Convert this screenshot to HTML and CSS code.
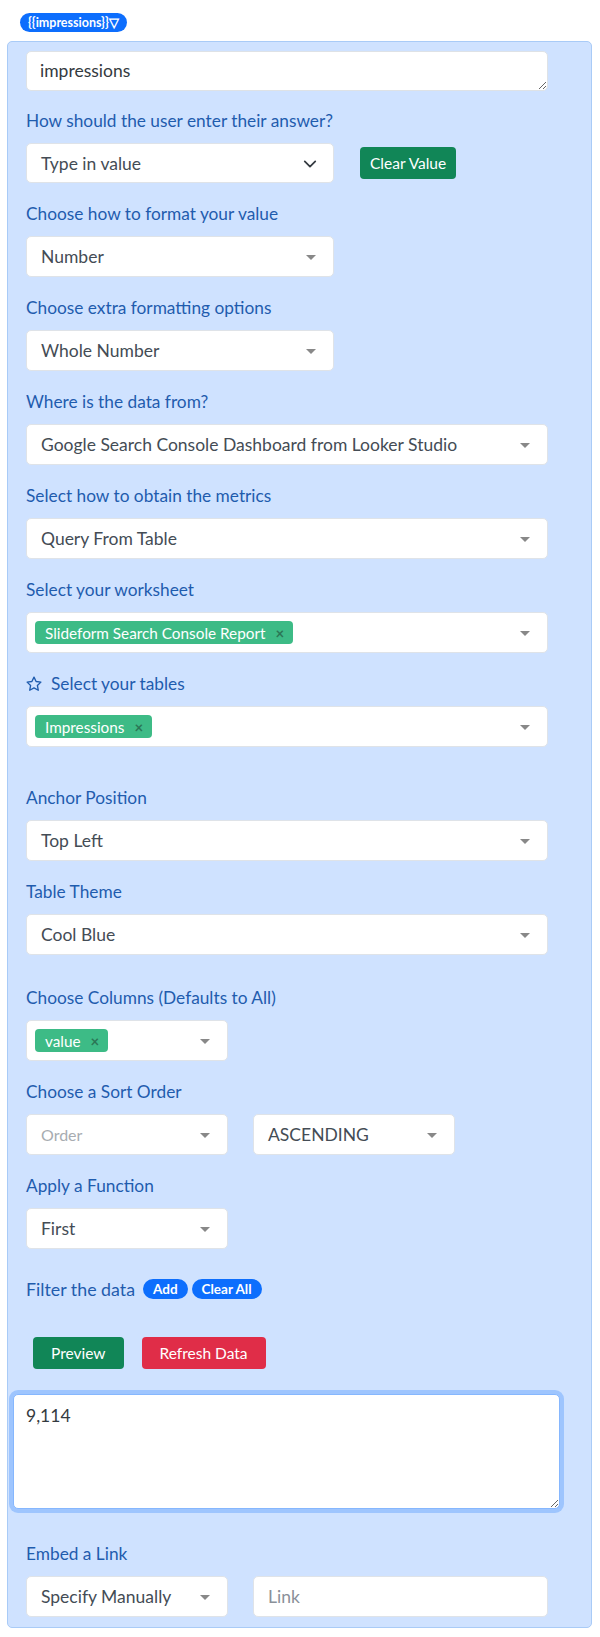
FILE: index.html
```html
<!DOCTYPE html>
<html lang="en">
<head>
    <meta charset="UTF-8">
    <title>Metric Variable</title>
    <link rel="stylesheet" href="styles.css">
</head>
<body>
<div class="page">
    <span class="var-badge">{{impressions}}&#9661;</span>

    <div class="panel">
        <div class="fields">
            <textarea class="name-input" rows="1">impressions</textarea>

            <!-- answer type -->
            <label class="field-label gap-sm">How should the user enter their answer?</label>
            <div class="row">
                <div class="native-select w-mid">Type in value
                    <svg class="chevron" width="14" height="14" viewBox="0 0 16 16"><path d="M2 5l6 6 6-6" fill="none" stroke="#343a40" stroke-width="2" stroke-linecap="round" stroke-linejoin="round"/></svg>
                </div>
                <button class="btn btn-green btn-clear">Clear Value</button>
            </div>

            <label class="field-label">Choose how to format your value</label>
            <div class="select w-mid">Number<span class="caret"></span></div>

            <label class="field-label">Choose extra formatting options</label>
            <div class="select w-mid">Whole Number<span class="caret"></span></div>

            <!-- data source -->
            <label class="field-label">Where is the data from?</label>
            <div class="select w-full">Google Search Console Dashboard from Looker Studio<span class="caret"></span></div>

            <label class="field-label">Select how to obtain the metrics</label>
            <div class="select w-full">Query From Table<span class="caret"></span></div>

            <label class="field-label">Select your worksheet</label>
            <div class="select multi w-full">
                <span class="tag">Slideform Search Console Report <span class="tag-x">&times;</span></span>
                <span class="caret"></span>
            </div>

            <label class="field-label">
                <svg class="star" width="18" height="18" viewBox="0 0 24 24"><path d="M12 2.8l2.8 5.9 6.4.8-4.7 4.4 1.2 6.4L12 17.2l-5.7 3.1 1.2-6.4-4.7-4.4 6.4-.8z" fill="none" stroke="#1f5cae" stroke-width="1.8" stroke-linejoin="round"/></svg>
                Select your tables
            </label>
            <div class="select multi w-full">
                <span class="tag">Impressions <span class="tag-x">&times;</span></span>
                <span class="caret"></span>
            </div>

            <!-- table options -->
            <label class="field-label gap-lg">Anchor Position</label>
            <div class="select w-full">Top Left<span class="caret"></span></div>

            <label class="field-label">Table Theme</label>
            <div class="select w-full">Cool Blue<span class="caret"></span></div>

            <label class="field-label gap-md">Choose Columns (Defaults to All)</label>
            <div class="select multi w-sm">
                <span class="tag">value <span class="tag-x">&times;</span></span>
                <span class="caret"></span>
            </div>

            <label class="field-label">Choose a Sort Order</label>
            <div class="row">
                <div class="select w-sm placeholder">Order<span class="caret"></span></div>
                <div class="select w-sm">ASCENDING<span class="caret"></span></div>
            </div>

            <label class="field-label">Apply a Function</label>
            <div class="select w-sm">First<span class="caret"></span></div>

            <div class="filter-line">
                <span class="filter-text">Filter the data</span>
                <span class="pill">Add</span>
                <span class="pill">Clear All</span>
            </div>

            <div class="actions">
                <button class="btn btn-green">Preview</button>
                <button class="btn btn-red">Refresh Data</button>
            </div>
        </div>

        <textarea class="result-box">9,114</textarea>

        <div class="fields">
            <label class="field-label gap-link">Embed a Link</label>
            <div class="row">
                <div class="select w-sm">Specify Manually<span class="caret"></span></div>
                <div class="text-input">Link</div>
            </div>
        </div>
    </div>
</div>
</body>
</html>
```

FILE: styles.css
```css
body {
    margin: 0;
    font-family: Lato, 'Open Sans', Arial, sans-serif;
    color: #343a40;
    background: #fff;
}
.page {
    padding: 11px 8px 12px 7px;
}
.var-badge {
    display: inline-block;
    margin-left: 13px;
    padding: 2px 8px 2px 8px;
    background: #0d6efd;
    color: #fff;
    font-size: 12.5px;
    font-weight: 700;
    line-height: 15px;
    border-radius: 10px;
}
.panel {
    margin-top: 9px;
    background: #cfe2ff;
    border: 1px solid #a9cbf7;
    border-radius: 5px;
    padding: 9px 0 10px;
}
.fields {
    padding: 0 18px;
}
.name-input {
    display: block;
    box-sizing: border-box;
    width: 522px;
    height: 40px;
    margin: 0;
    padding: 8px 13px;
    font-family: inherit;
    font-size: 17.5px;
    color: #343a40;
    border: 1px solid #dee2e6;
    border-radius: 5px;
    resize: vertical;
    overflow: hidden;
}
.field-label {
    display: flex;
    align-items: center;
    gap: 8px;
    margin: 19px 0 10px;
    font-size: 17.3px;
    line-height: 24px;
    color: #1f5cae;
}
.gap-sm { margin-top: 18px; }
.gap-lg { margin-top: 39px; }
.gap-md { margin-top: 31px; }
.gap-link { margin-top: 33px; }
.star { margin-left: -1px; }
.row {
    display: flex;
    align-items: center;
    gap: 25px;
}
.select, .native-select, .text-input {
    position: relative;
    box-sizing: border-box;
    height: 41px;
    display: flex;
    align-items: center;
    padding: 0 30px 0 14px;
    background: #fff;
    border: 1px solid #dfe3e8;
    border-radius: 5px;
    font-size: 17.5px;
    color: #444c55;
    white-space: nowrap;
}
.native-select { height: 40px; }
.w-full { width: 522px; }
.w-mid { width: 308px; }
.w-sm { width: 202px; }
.text-input {
    width: 295px;
    color: #8a9099;
}
.placeholder { color: #a7acb1; font-size: 16px; }
.caret {
    position: absolute;
    right: 17px;
    top: 18px;
    border-left: 5px solid transparent;
    border-right: 5px solid transparent;
    border-top: 5px solid #888;
}
.chevron {
    position: absolute;
    right: 16px;
    top: 13px;
}
.multi { padding-left: 8px; }
.tag {
    display: inline-flex;
    align-items: center;
    height: 23px;
    padding: 0 9px 0 10px;
    background: #3dbb86;
    color: #fff;
    font-size: 15.3px;
    border-radius: 4px;
}
.tag-x {
    margin-left: 10px;
    color: #2b7656;
    font-size: 15px;
    font-weight: 700;
}
.btn {
    font-family: inherit;
    font-size: 15.5px;
    color: #fff;
    border: 0;
    border-radius: 4px;
    cursor: pointer;
}
.btn-green { background: #118657; }
.btn-red { background: #e02d48; }
.btn-clear {
    height: 32px;
    padding: 0 10px;
    margin-left: 1px;
}
.filter-line {
    display: flex;
    align-items: center;
    margin-top: 28px;
    height: 24px;
}
.filter-text {
    font-size: 17.8px;
    color: #1f5cae;
    margin-right: 8px;
}
.pill {
    display: inline-block;
    margin-right: 4px;
    padding: 0 10px;
    line-height: 20px;
    background: #0d6efd;
    color: #fff;
    font-size: 13.5px;
    font-weight: 700;
    border-radius: 10px;
}
.actions {
    display: flex;
    gap: 18px;
    padding: 36px 7px 0;
}
.actions .btn {
    height: 32px;
    padding: 0 18px;
}
.result-box {
    display: block;
    box-sizing: border-box;
    width: 547px;
    height: 115px;
    margin: 25px 0 0 5px;
    padding: 10px 12px;
    font-family: inherit;
    font-size: 17.5px;
    color: #343a40;
    border: 1px solid #86b7fe;
    border-radius: 5px;
    box-shadow: 0 0 0 4px #9ec5fe;
    outline: none;
    resize: vertical;
}
```
